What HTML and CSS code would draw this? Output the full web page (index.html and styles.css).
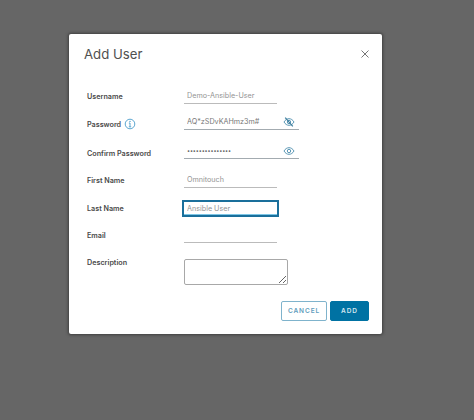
FILE: index.html
```html
<!DOCTYPE html>
<html lang="en">
<head>
<meta charset="UTF-8">
<title>Add User</title>
<link rel="stylesheet" href="styles.css">
</head>
<body>
  <div class="modal">
    <div class="modal-header">
      <h3 class="modal-title">Add User</h3>
      <svg class="close-icon" width="10" height="10" viewBox="0 0 10 10">
        <path d="M1.5 1.5l7 7M8.5 1.5l-7 7" />
      </svg>
    </div>

    <form class="form">
      <label class="label">Username</label>
      <div class="field"><input class="input" type="text" value="Demo-Ansible-User"></div>

      <label class="label">Password
        <svg class="info-icon" width="12" height="12" viewBox="0 0 12 12">
          <circle cx="6" cy="6" r="4.8" />
          <path d="M6 5v3.6M4.8 8.8h2.4M4.9 5h1.1" />
          <circle class="info-dot" cx="6" cy="3.4" r="0.7" />
        </svg>
      </label>
      <div class="field field-wide">
        <input class="input" type="text" value="AQ*zSDvKAHmz3m#">
        <svg class="eye-icon" width="12" height="10" viewBox="0 0 12 10">
          <path d="M1 5c1.300-2.200 3-3.300 5-3.300s3.700 1.100 5 3.300c-1.300 2.200-3 3.300-5 3.300s-3.700-1.100-5-3.300z" />
          <circle cx="6" cy="5" r="1.700" />
          <path class="eye-slash" d="M2.200 .6l7.600 8.800" />
        </svg>
      </div>

      <label class="label">Confirm Password</label>
      <div class="field field-wide">
        <input class="input input-dots" type="password" value="AQ*zSDvKAHmz3m#">
        <svg class="eye-icon" width="12" height="10" viewBox="0 0 12 10">
          <path d="M1 5c1.300-2.200 3-3.300 5-3.300s3.700 1.100 5 3.300c-1.300 2.200-3 3.300-5 3.300s-3.700-1.100-5-3.300z" />
          <circle cx="6" cy="5" r="1.700" />
        </svg>
      </div>

      <label class="label">First Name</label>
      <div class="field"><input class="input" type="text" value="Omnitouch"></div>

      <label class="label">Last Name</label>
      <div class="field field-focus"><input class="input" type="text" value="Ansible User"></div>

      <label class="label">Email</label>
      <div class="field"><input class="input" type="text"></div>

      <label class="label">Description</label>
      <textarea class="textarea"></textarea>
    </form>

    <div class="modal-footer">
      <button class="btn btn-outline" type="button">Cancel</button>
      <button class="btn btn-primary" type="button">Add</button>
    </div>
  </div>
</body>
</html>
```

FILE: styles.css
```css
html, body {
  margin: 0;
  height: 420px;
  overflow: hidden;
}
body {
  background-color: #666;
  padding: 34px 0 0 69px;
  box-sizing: border-box;
  font-family: "Inter", "Liberation Sans", sans-serif;
}
.modal {
  width: 313px;
  height: 300px;
  background-color: #fff;
  border-radius: 2px;
  box-shadow: 0 0 3px 1px #3f3f3f;
  box-sizing: border-box;
}
.modal-header {
  display: flex;
  justify-content: space-between;
  align-items: center;
  padding: 10px 12px 0 15px;
}
.modal-title {
  margin: 0;
  font-size: 13.2px;
  line-height: 20px;
  font-weight: 400;
  color: #505050;
}
.close-icon path {
  fill: none;
  stroke: #666;
  stroke-width: 0.9;
}
.form {
  display: grid;
  grid-template-columns: 97px max-content;
  grid-template-rows: 28px 29px 27px 28px 27px 27px auto;
  margin: 22px 0 0 18px;
}
.label {
  display: flex;
  align-items: center;
  height: 20px;
  font-size: 7.2px;
  font-weight: 600;
  color: #4a4a4a;
}
.field {
  display: flex;
  align-items: center;
  box-sizing: border-box;
  width: 93px;
  height: 16px;
  margin-top: 2px;
  border-bottom: 1px solid #bbb;
}
.field-wide {
  width: 115px;
  margin-top: 0;
  border-bottom-color: #a3abb0;
}
.field-focus {
  width: 97px;
  height: 17px;
  margin-left: -2px;
  border: 2px solid #1a6f9b;
  box-shadow: inset 0 -1px 0 #7cc6e6;
}
.input {
  flex: 1;
  min-width: 0;
  border: none;
  outline: none;
  padding: 0 0 0 3px;
  font-family: inherit;
  font-size: 7.2px;
  color: #949494;
  background: transparent;
}
.field-wide .input {
  color: #777;
}
.field-wide .input-dots {
  font-size: 5.4px;
  letter-spacing: -0.1px;
  color: #666;
}
.eye-icon {
  margin-right: 4px;
}
.eye-icon path, .eye-icon circle {
  fill: none;
  stroke: #5a97b5;
  stroke-width: 1;
}
.eye-icon .eye-slash {
  stroke: #3f7f9f;
  stroke-width: 1.2;
}
.info-icon {
  margin-left: 3px;
}
.info-icon circle, .info-icon path {
  fill: none;
  stroke: #4a9ccb;
  stroke-width: 0.9;
}
.info-icon .info-dot {
  fill: #4a9ccb;
  stroke: none;
}
.textarea {
  box-sizing: border-box;
  width: 104px;
  height: 26px;
  margin: 7px 0 0;
  padding: 2px;
  border: 1px solid #a8a8a8;
  border-radius: 2px;
  outline: none;
  display: block;
}
.modal-footer {
  display: flex;
  justify-content: flex-end;
  gap: 3px;
  margin-top: 16px;
  padding-right: 13px;
}
.btn {
  height: 20px;
  padding: 0;
  border-radius: 2px;
  font-family: inherit;
  font-size: 6.5px;
  font-weight: 600;
  letter-spacing: 0.9px;
  text-transform: uppercase;
}
.btn-outline {
  width: 46px;
  background-color: #fff;
  border: 1px solid #7fb3cc;
  color: #5f9dbd;
}
.btn-primary {
  width: 39px;
  background-color: #0072a3;
  border: 1px solid #0072a3;
  color: #d5e7f0;
}
```
